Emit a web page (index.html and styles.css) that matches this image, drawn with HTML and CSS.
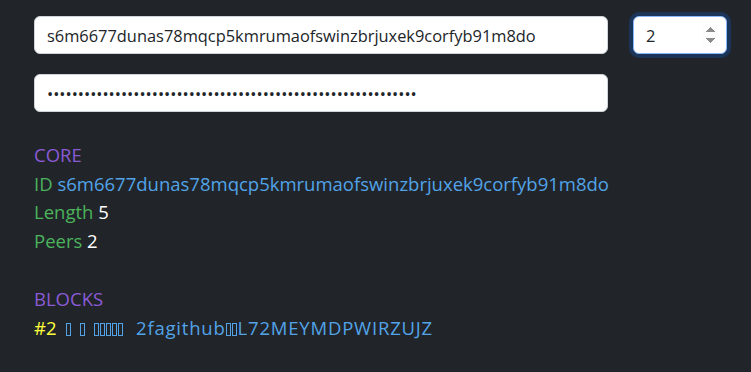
FILE: index.html
```html
<!DOCTYPE html>
<html>
<head>
<meta charset="utf-8">
<link rel="stylesheet" href="styles.css">
</head>
<body>
<div class="page">
  <div class="controls">
    <input class="field wide" type="text" value="s6m6677dunas78mqcp5kmrumaofswinzbrjuxek9corfyb91m8do">
    <input class="field num" type="number" value="2" autofocus>
    <input class="field wide" type="password" value="000000000000000000000000000000000000000000000000000000000000">
  </div>
  <div class="section">
    <div class="head">CORE</div>
    <div><span class="key">ID</span> <span class="val">s6m6677dunas78mqcp5kmrumaofswinzbrjuxek9corfyb91m8do</span></div>
    <div><span class="key">Length</span> <span class="plain">5</span></div>
    <div><span class="key">Peers</span> <span class="plain">2</span></div>
  </div>
  <div class="section">
    <div class="head">BLOCKS</div>
    <div class="block"><span class="num-id">#2</span><span class="val"><span class="tofu"></span><span class="gap"></span><span class="tofu"></span><span class="gap"></span><span class="tofu"></span><span class="tofu"></span><span class="tofu"></span><span class="tofu"></span><span class="tofu"></span><span class="gap wide-gap"></span><span class="spaced">2fagithub</span><span class="tofu"></span><span class="tofu"></span><span class="spaced">L72MEYMDPWIRZUJZ</span></span></div>
  </div>
</div>
</body>
</html>
```

FILE: styles.css
```css
html, body {
  margin: 0;
  background: #212529;
}
.page {
  padding: 16px 34px;
  font-family: "Open Sans", sans-serif;
  font-size: 18.5px;
  line-height: 28.7px;
  color: #ffffff;
}
.controls {
  display: grid;
  grid-template-columns: 574px 94px;
  column-gap: 25px;
  row-gap: 20px;
  align-items: start;
}
.field {
  box-sizing: border-box;
  height: 38px;
  margin: 0;
  padding: 6px 12px;
  font-family: "Open Sans", sans-serif;
  font-size: 16.4px;
  color: #212529;
  background: #ffffff;
  border: 1px solid #ced4da;
  border-radius: 6px;
  outline: none;
}
.num {
  box-shadow: 0 0 0 4px #1a3558;
  border-color: #86b7fe;
  padding-right: 8px;
}
.section {
  margin-top: 29px;
}
.head {
  color: #8b5ad6;
}
.key {
  color: #4bb35c;
}
.val {
  color: #52a3e8;
}
.spaced {
  letter-spacing: 0.8px;
}
.plain {
  color: #ffffff;
}
.num-id {
  display: inline-block;
  width: 32px;
  color: #ffff3c;
}
.tofu {
  display: inline-block;
  box-sizing: border-box;
  width: 5px;
  height: 13px;
  border: 1px solid #52a3e8;
  margin-right: 1px;
  vertical-align: -1px;
}
.gap {
  display: inline-block;
  width: 8px;
}
.wide-gap {
  width: 12px;
}
```
